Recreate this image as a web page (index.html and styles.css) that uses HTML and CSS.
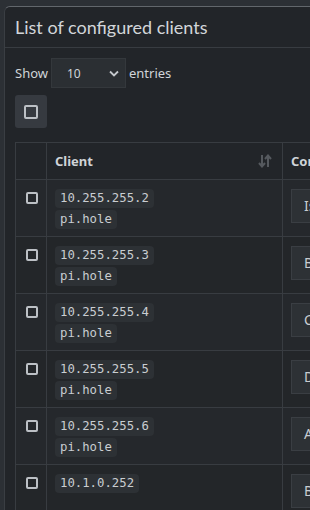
FILE: index.html
```html
<!DOCTYPE html>
<html lang="en">
<head>
    <meta charset="UTF-8">
    <meta name="viewport" content="width=device-width, initial-scale=1.0">
    <title>Clients</title>
    <link rel="stylesheet" href="styles.css">
</head>
<body>
    <div class="card">
        <div class="card-header">
            <h3 class="card-title">List of configured clients</h3>
        </div>
        <div class="card-body">
            <div class="length">
                <span>Show</span>
                <div class="select">
                    <span>10</span>
                    <svg width="10" height="7" viewBox="0 0 10 7"><path d="M1 1.5 L5 5.5 L9 1.5" fill="none" stroke="#c5c9cd" stroke-width="1.8"/></svg>
                </div>
                <span>entries</span>
            </div>
            <button class="select-all"><span class="box big"></span></button>
            <table class="clients">
                <thead>
                    <tr>
                        <th class="col-check"></th>
                        <th class="col-client">
                            <div class="th-inner">
                                <span>Client</span>
                                <svg width="14" height="14" viewBox="0 0 14 14"><path d="M4 1 V12 M1 9 L4 12.5 L7 9" fill="none" stroke="#55595e" stroke-width="2"/><path d="M10 13 V2 M7 5 L10 1.5 L13 5" fill="none" stroke="#55595e" stroke-width="2"/></svg>
                            </div>
                        </th>
                        <th class="col-comment">Comment</th>
                    </tr>
                </thead>
                <tbody>
                    <tr>
                        <td><span class="box"></span></td>
                        <td><div class="addr"><code>10.255.255.2</code><code>pi.hole</code></div></td>
                        <td><span class="pill">Is</span></td>
                    </tr>
                    <tr>
                        <td><span class="box"></span></td>
                        <td><div class="addr"><code>10.255.255.3</code><code>pi.hole</code></div></td>
                        <td><span class="pill">B</span></td>
                    </tr>
                    <tr>
                        <td><span class="box"></span></td>
                        <td><div class="addr"><code>10.255.255.4</code><code>pi.hole</code></div></td>
                        <td><span class="pill">C</span></td>
                    </tr>
                    <tr>
                        <td><span class="box"></span></td>
                        <td><div class="addr"><code>10.255.255.5</code><code>pi.hole</code></div></td>
                        <td><span class="pill">D</span></td>
                    </tr>
                    <tr>
                        <td><span class="box"></span></td>
                        <td><div class="addr"><code>10.255.255.6</code><code>pi.hole</code></div></td>
                        <td><span class="pill">A</span></td>
                    </tr>
                    <tr>
                        <td><span class="box"></span></td>
                        <td><div class="addr"><code>10.1.0.252</code></div></td>
                        <td><span class="pill">B</span></td>
                    </tr>
                </tbody>
            </table>
        </div>
    </div>
</body>
</html>
```

FILE: styles.css
```css
body {
    margin: 0;
    background: #2c3035;
    font-family: "Noto Sans", sans-serif;
    color: #c9cdd1;
    overflow: hidden;
    height: 510px;
}
.card {
    margin: 6px 0 0 4px;
    width: 340px;
    background: #222529;
    border: 1px solid #3a3e43;
    border-top-color: #62676c;
    border-radius: 6px 0 0 0;
    height: 600px;
}
.card-header {
    height: 40px;
    padding: 0 10px;
    display: flex;
    align-items: center;
    border-bottom: 1px solid #383c41;
}
.card-title {
    margin: 0;
    font-family: Lato, sans-serif;
    font-size: 18px;
    font-weight: 400;
    color: #d2d6da;
}
.card-body {
    padding: 10px 10px;
}
.length {
    display: flex;
    align-items: center;
    gap: 3px;
    font-size: 13px;
    color: #d0d4d8;
}
.select {
    width: 75px;
    height: 30px;
    box-sizing: border-box;
    background: #2b2f33;
    border: 1px solid #34383c;
    display: flex;
    align-items: center;
    justify-content: space-between;
    padding: 0 6px 0 15px;
    font-size: 12px;
}
.select-all {
    margin-top: 7px;
    width: 32px;
    height: 33px;
    background: #363a40;
    border: none;
    border-radius: 3px;
    display: flex;
    align-items: center;
    justify-content: center;
    padding: 0;
}
.box {
    display: inline-block;
    width: 12px;
    height: 12px;
    box-sizing: border-box;
    border: 2px solid #bcc0c5;
    border-radius: 2px;
}
.box.big {
    width: 14px;
    height: 14px;
}
.clients {
    margin-top: 14px;
    border-collapse: collapse;
    table-layout: fixed;
    width: 330px;
}
.clients th,
.clients td {
    border: 1px solid #383c41;
    text-align: left;
    vertical-align: top;
}
.clients th {
    height: 36px;
    vertical-align: middle;
    font-size: 13px;
    font-weight: 700;
    color: #cfd3d7;
    padding: 0 8px;
}
.col-check { width: 14px; }
.col-client { width: 219px; }
.th-inner {
    display: flex;
    align-items: center;
    justify-content: space-between;
    padding-right: 2px;
}
.clients td {
    height: 40px;
    padding: 9px 8px 7px;
    background: #25282c;
}
.clients tbody tr:nth-child(even) td {
    background: #232629;
}
.clients td:first-child {
    padding: 12px 0 0 10px;
}
.clients td .box {
    vertical-align: top;
}
.addr {
    display: flex;
    flex-direction: column;
    align-items: flex-start;
    gap: 2px;
}
code {
    font-family: "DejaVu Sans Mono", monospace;
    font-size: 12.3px;
    line-height: 19px;
    padding: 0 5px;
    background: #2d3135;
    color: #c9cdd1;
    border-radius: 4px;
}
.pill {
    display: inline-block;
    height: 34px;
    width: 40px;
    box-sizing: border-box;
    border: 1px solid #3a3e43;
    background: #2d3135;
    font-size: 14px;
    line-height: 32px;
    padding-left: 12px;
    color: #c9cdd1;
}
```
